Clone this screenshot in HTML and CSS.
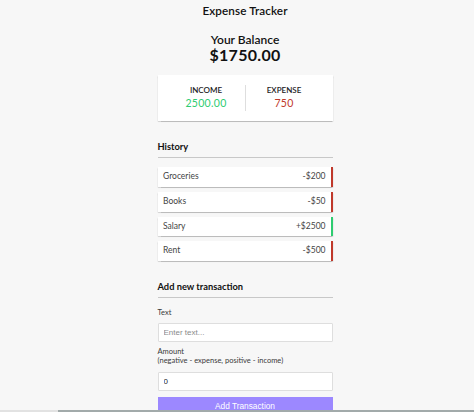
FILE: index.html
```html
<!DOCTYPE html>
<html lang="en">
<head>
<meta charset="UTF-8">
<title>Expense Tracker</title>
<link rel="stylesheet" href="styles.css">
</head>
<body>
  <h2 class="title">Expense Tracker</h2>
  <div class="container">
    <h4 class="balance-label">Your Balance</h4>
    <h1 class="balance">$1750.00</h1>

    <div class="inc-exp">
      <div class="inc-exp-col inc-col">
        <h4 class="ie-label">Income</h4>
        <p class="money plus-money">2500.00</p>
      </div>
      <div class="inc-exp-col">
        <h4 class="ie-label">Expense</h4>
        <p class="money minus-money">750</p>
      </div>
    </div>

    <h3 class="section-title">History</h3>
    <ul class="list">
      <li class="item minus"><span>Groceries</span><span>-$200</span></li>
      <li class="item minus"><span>Books</span><span>-$50</span></li>
      <li class="item plus"><span>Salary</span><span>+$2500</span></li>
      <li class="item minus"><span>Rent</span><span>-$500</span></li>
    </ul>

    <h3 class="section-title">Add new transaction</h3>
    <form class="form">
      <div class="form-control">
        <label class="field-label" for="text">Text</label>
        <input class="field" type="text" id="text" placeholder="Enter text...">
      </div>
      <div class="form-control">
        <label class="field-label" for="amount">Amount <br>(negative - expense, positive - income)</label>
        <input class="field" type="number" id="amount" value="0">
      </div>
      <button class="btn" type="button">Add Transaction</button>
    </form>
  </div>
  <div class="hscroll"><div class="hscroll-thumb"></div></div>
</body>
</html>
```

FILE: styles.css
```css
* { box-sizing: border-box; }

html, body { margin: 0; }

body {
  background: #f7f7f7;
  font-family: Lato, "Open Sans", sans-serif;
  color: #111;
  padding-left: 16px;
  overflow: hidden;
  height: 412px;
}

.title {
  margin: 2.6px 0 0;
  font-size: 11.7px;
  line-height: 14px;
  font-weight: 600;
  text-align: center;
  letter-spacing: 0.1px;
}

.container {
  width: 175px;
  margin: 0 auto;
}

.balance-label {
  margin: 16.1px 0 0;
  font-size: 12px;
  line-height: 13px;
  font-weight: 600;
  text-align: center;
}

.balance {
  margin: 0.8px 0 0;
  font-size: 16px;
  line-height: 18px;
  font-weight: 700;
  text-align: center;
  letter-spacing: 0.3px;
}

.inc-exp {
  display: flex;
  background: #fff;
  margin: 10.5px 0 0;
  padding: 10px 10px 9.5px;
  box-shadow: 0 0.5px 1.5px rgba(0,0,0,0.12), 0 0.5px 1px rgba(0,0,0,0.2);
}

.inc-exp-col {
  flex: 1;
  text-align: center;
}

.inc-col { border-right: 1px solid #dedede; }

.ie-label {
  margin: 0;
  font-size: 8px;
  line-height: 10px;
  font-weight: 600;
  text-transform: uppercase;
  color: #222;
}

.money {
  margin: 2px 0 2.5px;
  font-size: 10.5px;
  line-height: 12px;
  letter-spacing: 0.3px;
}

.plus-money { color: #2ecc71; }
.minus-money { color: #c0392b; }

.section-title {
  margin: 20.2px 0 5px;
  padding-bottom: 4.5px;
  border-bottom: 1px solid #c8c8c8;
  font-size: 9.3px;
  line-height: 11px;
  font-weight: 700;
}

.list {
  list-style: none;
  padding: 0;
  margin: 9.5px 0 20px;
}

.item {
  display: flex;
  justify-content: space-between;
  background: #fff;
  color: #444;
  font-size: 8.5px;
  line-height: 9.7px;
  padding: 5px 5px 5px 5.5px;
  margin: 5px 0;
  box-shadow: 0 0.5px 1.5px rgba(0,0,0,0.12), 0 0.5px 1px rgba(0,0,0,0.2);
}

.list .item:first-child { margin-top: 0; }

.item.plus { border-right: 2.5px solid #2ecc71; }
.item.minus { border-right: 2.5px solid #c0392b; }

.form { margin: 0; }

.form-control {
  display: flex;
  flex-direction: column;
  align-items: flex-start;
}

.field-label {
  margin: 5px 0 6.3px;
  font-size: 7.5px;
  line-height: 9px;
  font-weight: 400;
  color: #3a3a3a;
}

.field {
  align-self: stretch;
  width: 100%;
  border: 1px solid #dedede;
  border-radius: 1px;
  background: #fff;
  font-family: "Liberation Sans", Arial, sans-serif;
  font-size: 8px;
  line-height: 9.5px;
  height: 19.5px;
  padding: 4px 5px;
  color: #222;
  outline: none;
}

.field::placeholder { color: #8a8a8a; }

.field::-webkit-outer-spin-button,
.field::-webkit-inner-spin-button { -webkit-appearance: none; margin: 0; }

.btn {
  display: block;
  width: 100%;
  background: #9c88ff;
  color: #fff;
  border: 0;
  font-family: "Liberation Sans", Arial, sans-serif;
  font-size: 8.3px;
  line-height: 9.6px;
  padding: 5px;
  margin: 6px 0 15px;
}

.hscroll {
  position: fixed;
  left: 0;
  right: 0;
  bottom: 0;
  height: 2px;
  background: #e2e2e2;
}

.hscroll-thumb {
  margin-left: 58px;
  height: 100%;
  background: #a2aaaa;
}
```
